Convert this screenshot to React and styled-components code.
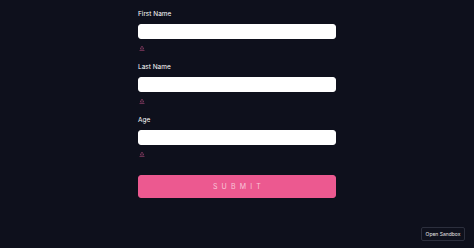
import React from 'react';
import styled, { createGlobalStyle } from 'styled-components';

const GlobalStyle = createGlobalStyle`
  html, body {
    margin: 0;
    padding: 0;
    background: #0e101c;
    font-family: Inter, "Liberation Sans", Arial, sans-serif;
  }
  body {
    width: 474px;
    height: 248px;
    overflow: hidden;
  }
`;

const Page = styled.div`
  width: 474px;
  height: 248px;
  position: relative;
  background: #0e101c;
`;

const Form = styled.form`
  width: 198px;
  margin: 0 auto;
  padding-top: 9px;
  display: flex;
  flex-direction: column;
`;

const Field = styled.div`
  display: flex;
  flex-direction: column;
  height: 53px;
`;

const Label = styled.label`
  display: block;
  color: #fff;
  font-size: 6.5px;
  line-height: 10px;
  margin-bottom: 5px;
`;

const Input = styled.input`
  box-sizing: border-box;
  width: 100%;
  height: 15px;
  border: 1px solid #fff;
  border-radius: 3px;
  background: #fff;
  padding: 0 5px;
  font-size: 7px;
  outline: none;
`;

const ErrorMark = styled.p`
  margin: 5px 0 0 1px;
  height: 7px;
  display: flex;
  align-items: center;
`;

const Submit = styled.button`
  margin-top: 7px;
  height: 23px;
  width: 100%;
  border: 1px solid #ec5990;
  border-radius: 3px;
  background: #ec5990;
  color: #f9c6d8;
  font-family: Inter, "Liberation Sans", Arial, sans-serif;
  font-size: 7px;
  letter-spacing: 4.2px;
  text-transform: uppercase;
  padding: 0 0 0 4px;
`;

const SandboxButton = styled.button`
  position: absolute;
  right: 9px;
  bottom: 7px;
  height: 14px;
  width: 44px;
  padding: 0;
  background: #0e101c;
  color: #e6e6e6;
  border: 1px solid #2c2f3d;
  border-radius: 2px;
  font-family: Inter, "Liberation Sans", Arial, sans-serif;
  font-size: 5px;
`;

const Warn = () => (
  <svg width="6" height="6" viewBox="0 0 6 6">
    <path d="M3 1 L4.8 4 L1.2 4 Z" fill="none" stroke="#8e3d66" strokeWidth="0.7" />
    <line x1="0.5" y1="5.5" x2="5.5" y2="5.5" stroke="#8e3d66" strokeWidth="0.7" />
  </svg>
);

const fields = [
  { name: 'firstName', label: 'First Name' },
  { name: 'lastName', label: 'Last Name' },
  { name: 'age', label: 'Age' },
];

export default function App() {
  return (
    <Page>
      <GlobalStyle />
      <Form onSubmit={(e) => e.preventDefault()}>
        {fields.map((f) => (
          <Field key={f.name}>
            <Label htmlFor={f.name}>{f.label}</Label>
            <Input id={f.name} name={f.name} />
            <ErrorMark><Warn /></ErrorMark>
          </Field>
        ))}
        <Submit type="submit">Submit</Submit>
      </Form>
      <SandboxButton>Open Sandbox</SandboxButton>
    </Page>
  );
}
